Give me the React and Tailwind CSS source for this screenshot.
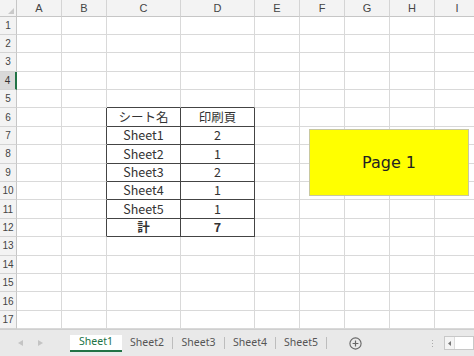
import React from "react";

const COLS = [
  { l: "A", w: "w-[45px]" },
  { l: "B", w: "w-[45px]" },
  { l: "C", w: "w-[74px]" },
  { l: "D", w: "w-[74px]" },
  { l: "E", w: "w-[45px]" },
  { l: "F", w: "w-[45px]" },
  { l: "G", w: "w-[45px]" },
  { l: "H", w: "w-[45px]" },
  { l: "I", w: "w-[45px]" },
];

const TABLE = {
  6: ["シート名", "印刷頁"],
  7: ["Sheet1", "2"],
  8: ["Sheet2", "1"],
  9: ["Sheet3", "2"],
  10: ["Sheet4", "1"],
  11: ["Sheet5", "1"],
  12: ["計", "7"],
};

function Cell({ r, c }) {
  const inTable = r >= 6 && r <= 12 && (c === 2 || c === 3);
  const darkR = inTable || (c === 1 && r >= 6 && r <= 12);
  const darkB = inTable || (r === 5 && (c === 2 || c === 3));
  const rc = darkR ? "border-r-[#444444]" : "border-r-[#d9d9d9]";
  const bc = darkB ? "border-b-[#444444]" : "border-b-[#d9d9d9]";
  const content = inTable ? TABLE[r][c - 2] : null;
  const bold = r === 12;
  return (
    <div
      className={`${COLS[c].w} shrink-0 h-full border-r border-b ${rc} ${bc} flex items-center justify-center`}
    >
      {content && (
        <span
          className={`text-[12.5px] leading-none text-[#333] ${bold ? "font-bold" : ""}`}
          style={{ fontFamily: '"Noto Sans CJK JP", sans-serif' }}
        >
          {content}
        </span>
      )}
    </div>
  );
}

function Row({ r }) {
  const sel = r === 4;
  return (
    <div className="flex h-[18.4px] shrink-0">
      <div
        className={`w-[17px] shrink-0 h-full border-b border-b-[#d4d4d4] flex items-center justify-center text-[10px] ${
          sel
            ? "bg-[#d9d9d9] border-r-2 border-r-[#217346] text-[#333]"
            : "bg-[#f3f3f3] border-r border-r-[#c6c6c6] text-[#444]"
        }`}
      >
        {r}
      </div>
      {COLS.map((col, c) => (
        <Cell key={col.l} r={r} c={c} />
      ))}
    </div>
  );
}

function Tab({ label, active, w, divider }) {
  return (
    <div className={`${w} shrink-0 h-full flex items-center relative`}>
      <div
        className={`flex-1 h-[17px] flex items-center justify-center text-[10.5px] ${
          active
            ? "bg-white text-[#217346] border-b-2 border-b-[#217346]"
            : "text-[#555]"
        }`}
      >
        {label}
      </div>
      {divider && <div className="w-px h-[12px] bg-[#bdbdbd]" />}
    </div>
  );
}

export default function App() {
  const rows = Array.from({ length: 17 }, (_, i) => i + 1);
  return (
    <div
      className="w-[474px] h-[356px] overflow-hidden bg-white flex flex-col relative"
      style={{ fontFamily: '"Liberation Sans", Arial, sans-serif' }}
    >
      {/* column header */}
      <div className="flex h-[16.5px] shrink-0 bg-[#f3f3f3]">
        <div className="w-[17px] shrink-0 h-full border-r border-b border-[#c6c6c6] relative">
          <svg className="absolute right-[2px] bottom-[2px]" width="6" height="6" viewBox="0 0 6 6">
            <polygon points="6,0 6,6 0,6" fill="#c9c9c9" />
          </svg>
        </div>
        {COLS.map((col) => (
          <div
            key={col.l}
            className={`${col.w} shrink-0 h-full border-r border-b border-r-[#d4d4d4] border-b-[#c6c6c6] flex items-center justify-center text-[11px] text-[#444]`}
          >
            {col.l}
          </div>
        ))}
      </div>

      {rows.map((r) => (
        <Row key={r} r={r} />
      ))}

      {/* sheet tab bar */}
      <div className="flex-1 flex items-center bg-[#e9e9e9] border-t border-t-[#cfcfcf]" style={{ fontFamily: '"Noto Sans", sans-serif' }}>
        <div className="w-[70px] shrink-0 h-full flex items-center">
          <svg className="ml-[18px]" width="5" height="6" viewBox="0 0 5 6">
            <polygon points="5,0 5,6 0,3" fill="#c4c4c4" />
          </svg>
          <svg className="ml-[15px]" width="5" height="6" viewBox="0 0 5 6">
            <polygon points="0,0 0,6 5,3" fill="#c4c4c4" />
          </svg>
        </div>
        <Tab label="Sheet1" active w="w-[52px]" />
        <Tab label="Sheet2" w="w-[51px]" divider />
        <Tab label="Sheet3" w="w-[52px]" divider />
        <Tab label="Sheet4" w="w-[51px]" divider />
        <Tab label="Sheet5" w="w-[51px]" divider />
        <div className="ml-[22px] shrink-0">
          <svg width="13" height="13" viewBox="0 0 13 13">
            <circle cx="6.5" cy="6.5" r="5.6" fill="none" stroke="#666" strokeWidth="1.1" />
            <path d="M6.5 3.6v5.8M3.6 6.5h5.8" stroke="#666" strokeWidth="1.2" />
          </svg>
        </div>
        <div className="ml-[70px] shrink-0 flex flex-col gap-[2px]">
          <div className="w-px h-px bg-[#aaa]" />
          <div className="w-px h-px bg-[#aaa]" />
          <div className="w-px h-px bg-[#aaa]" />
        </div>
        <div className="ml-[11px] shrink-0 h-[14px] flex-1 flex border border-[#c8c8c8] bg-white">
          <div className="w-[10px] h-full flex items-center justify-center border-r border-[#dcdcdc] bg-[#f4f4f4]">
            <svg width="3" height="5" viewBox="0 0 3 5">
              <polygon points="3,0 3,5 0,2.5" fill="#777" />
            </svg>
          </div>
        </div>
      </div>

      {/* yellow shape */}
      <div
        className="absolute left-[309px] top-[129px] w-[160px] h-[67px] bg-[#ffff00] border border-[#c8c8a0] flex items-center justify-center text-[16px] text-[#222]"
        style={{ fontFamily: '"DejaVu Sans", Verdana, sans-serif' }}
      >
        Page 1
      </div>
    </div>
  );
}
